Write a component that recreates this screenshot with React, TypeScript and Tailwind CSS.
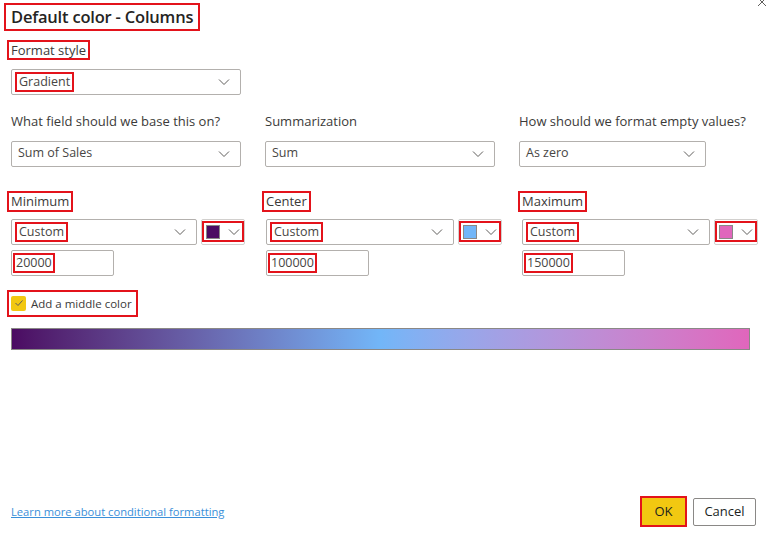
import React from "react";

const RED = "border-2 border-[#e3131b]";

function Chevron({ className = "" }: { className?: string }) {
  return (
    <svg width="12" height="8" viewBox="0 0 12 8" className={className}>
      <polyline points="1,1.5 6,6.5 11,1.5" fill="none" stroke="#605e5c" strokeWidth="1" />
    </svg>
  );
}

function Select({ value, width, boxed }: { value: string; width: string; boxed?: boolean }) {
  return (
    <div className={`${width} h-[26px] border border-[#b3b0ad] rounded-[2px] flex items-center justify-between pl-[3px] pr-[10px] bg-white text-[#484644]`}>
      {boxed ? (
        <span className={`${RED} px-[2px] leading-[16px]`}>{value}</span>
      ) : (
        <span className="pl-[3px]">{value}</span>
      )}
      <Chevron />
    </div>
  );
}

function ColorPick({ color }: { color: string }) {
  return (
    <div className="w-[44px] h-[26px] border border-[#d2d0ce] rounded-[2px] flex items-center">
      <div className={`${RED} w-full h-[21px] flex items-center justify-between pl-[2px] pr-[2px]`}>
        <span className="w-[14px] h-[14px] border border-[#8a8886]" style={{ background: color }} />
        <Chevron />
      </div>
    </div>
  );
}

function Label({ children }: { children: React.ReactNode }) {
  return <span className={`${RED} inline-block px-[2px] leading-[17px] text-[13px]`}>{children}</span>;
}

function RangeCol({ label, value, color, selectW, ml }: { label: string; value: string; color: string; selectW: string; ml: string }) {
  return (
    <div className={`flex flex-col ${ml}`}>
      <div className="-ml-[4px]">
        <Label>{label}</Label>
      </div>
      <div className="flex gap-[4px] mt-[7px]">
        <Select value="Custom" width={selectW} boxed />
        <ColorPick color={color} />
      </div>
      <div className="w-[103px] h-[26px] border border-[#b3b0ad] rounded-[2px] mt-[5px] flex items-center pl-[1px] text-[#484644]">
        <span className={`${RED} px-[1px] leading-[16px]`}>{value}</span>
      </div>
    </div>
  );
}

export default function App() {
  return (
    <div className="relative w-[768px] h-[537px] bg-white text-[#3b3a39] text-[12.5px] flex flex-col" style={{ fontFamily: "'Open Sans', 'Noto Sans', sans-serif" }}>
      <svg width="10" height="10" viewBox="0 0 10 10" className="absolute right-[1px] top-[-3px]">
        <path d="M1 1 L9 9 M9 1 L1 9" stroke="#605e5c" strokeWidth="1" />
      </svg>

      <div className="pl-[4px] mt-[3px]">
        <span className={`${RED} inline-block px-[5px] text-[16.5px] leading-[24px] font-semibold tracking-[-0.2px] text-[#252423]`}>Default color - Columns</span>
      </div>

      <div className="pl-[7px] mt-[9px]">
        <span className={`${RED} inline-block px-[2px] leading-[16px] text-[13px]`}>Format style</span>
      </div>

      <div className="pl-[11px] mt-[8px]">
        <Select value="Gradient" width="w-[230px]" boxed />
      </div>

      <div className="flex pl-[11px] mt-[17px]">
        <div className="w-[254px]">
          <div className="text-[13px] leading-[18px]">What field should we base this on?</div>
          <div className="mt-[11px]"><Select value="Sum of Sales" width="w-[230px]" /></div>
        </div>
        <div className="w-[254px]">
          <div className="text-[13px] leading-[18px]">Summarization</div>
          <div className="mt-[11px]"><Select value="Sum" width="w-[230px]" /></div>
        </div>
        <div>
          <div className="text-[13px] leading-[18px]">How should we format empty values?</div>
          <div className="mt-[11px]"><Select value="As zero" width="w-[187px]" /></div>
        </div>
      </div>

      <div className="flex pl-[11px] mt-[24px]">
        <RangeCol label="Minimum" value="20000" color="#4c0b63" selectW="w-[186px]" ml="ml-0" />
        <RangeCol label="Center" value="100000" color="#72b6f8" selectW="w-[188px]" ml="ml-[21px]" />
        <RangeCol label="Maximum" value="150000" color="#e066bc" selectW="w-[188px]" ml="ml-[20px]" />
      </div>

      <div className="pl-[7px] mt-[14px]">
        <div className={`${RED} inline-flex items-center gap-[5px] h-[27px] pl-[2px] pr-[4px]`}>
          <span className="w-[15px] h-[15px] rounded-[2px] bg-[#f2c811] flex items-center justify-center">
            <svg width="10" height="8" viewBox="0 0 10 8">
              <polyline points="1.5,4 4,6.5 8.5,1.5" fill="none" stroke="#605e5c" strokeWidth="1" />
            </svg>
          </span>
          <span className="text-[11.5px]">Add a middle color</span>
        </div>
      </div>

      <div className="pl-[11px] mt-[11px]">
        <div className="w-[739px] h-[22px] border border-[#8a8886] bg-gradient-to-r from-[#4b0a62] via-[#72b6f8] to-[#e066bc]" />
      </div>

      <div className="mt-auto mb-[10px] flex items-center justify-between pl-[11px] pr-[12px]">
        <a href="#" className="text-[#3a8fd9] underline text-[11.2px] mt-[2px]">Learn more about conditional formatting</a>
        <div className="flex items-center gap-[6px]">
          <div className={`${RED} p-0`}>
            <button className="w-[43px] h-[27px] bg-[#f2c811] text-[13px] text-[#201f1e]">OK</button>
          </div>
          <button className="w-[63px] h-[28px] border border-[#8a8886] rounded-[2px] bg-white text-[13px] text-[#201f1e]">Cancel</button>
        </div>
      </div>
    </div>
  );
}
